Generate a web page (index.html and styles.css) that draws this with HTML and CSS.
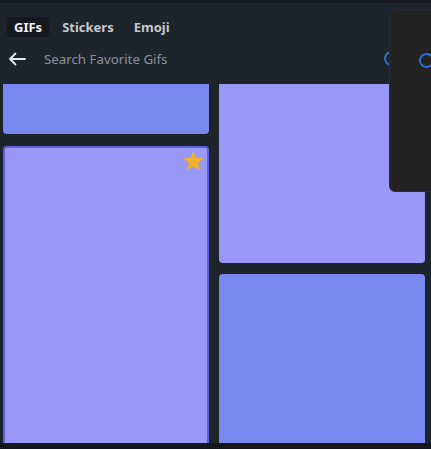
FILE: index.html
```html
<!DOCTYPE html>
<html>
<head>
<meta charset="utf-8">
<link rel="stylesheet" href="styles.css">
</head>
<body>
<div class="app">
  <div class="topline"></div>
  <div class="tabs">
    <span class="tab active">GIFs</span>
    <span class="tab">Stickers</span>
    <span class="tab">Emoji</span>
  </div>
  <div class="search">
    <svg class="back" width="18" height="14" viewBox="0 0 18 14"><path d="M17 7H2M7.5 1.5L2 7l5.5 5.5" fill="none" stroke="#e8e9ec" stroke-width="1.8" stroke-linecap="round" stroke-linejoin="round"/></svg>
    <span class="placeholder">Search Favorite Gifs</span>
    <span class="spinner"></span>
  </div>
  <div class="grid">
    <div class="col">
      <div class="tile blue t1"></div>
      <div class="tile lav t2 focused">
        <svg class="star" width="23" height="22" viewBox="0 0 24 23"><path d="M12 1l3.1 7 7.6.7-5.8 5 1.8 7.5L12 17.3 5.3 21.2l1.8-7.5-5.8-5 7.6-.7z" fill="#f0b132"/></svg>
      </div>
    </div>
    <div class="col">
      <div class="tile lav t3"></div>
      <div class="tile blue t4"></div>
    </div>
  </div>
  <div class="bottom"></div>
  <div class="popup"><span class="spinner inner"></span></div>
</div>
</body>
</html>
```
FILE: styles.css
```css
html, body {
  margin: 0;
  padding: 0;
  background: #1e242b;
}
.app {
  position: relative;
  width: 431px;
  height: 449px;
  overflow: hidden;
  background: #1e242b;
  font-family: "Noto Sans", "DejaVu Sans", sans-serif;
  display: flex;
  flex-direction: column;
}
.topline {
  height: 3px;
  background: #171b20;
}
.tabs {
  display: flex;
  align-items: center;
  gap: 6px;
  padding: 14px 0 0 7px;
  height: 20px;
}
.tab {
  font-size: 13px;
  font-weight: 700;
  color: #c5c8ce;
  padding: 0 7px;
  line-height: 20px;
  border-radius: 4px;
}
.tab.active {
  background: #15191e;
  color: #f2f3f5;
}
.search {
  display: flex;
  align-items: center;
  height: 30px;
  margin-top: 7px;
  padding-left: 8px;
}
.back {
  flex: none;
}
.placeholder {
  margin-left: 18px;
  font-size: 13.3px;
  color: #8b9098;
  flex: 1;
}
.spinner {
  width: 11px;
  height: 11px;
  border: 2px solid #2f6fd0;
  border-right-color: transparent;
  border-radius: 50%;
  margin-right: 32px;
}
.grid {
  display: flex;
  gap: 10px;
  padding: 0 6px 0 3px;
  margin-top: 10px;
  height: 362px;
  overflow: hidden;
}
.col {
  flex: 1;
  display: flex;
  flex-direction: column;
}
.tile {
  border-radius: 4px;
  flex: none;
  position: relative;
  box-sizing: border-box;
}
.blue { background: #7888ee; }
.lav { background: #9898f6; }
.t1 { height: 56px; margin-top: -6px; }
.t2 { height: 310px; margin-top: 12px; }
.t3 { height: 185px; margin-top: -6px; }
.t4 { height: 190px; margin-top: 11px; }
.focused {
  border: 2px solid #5d5fd6;
}
.star {
  position: absolute;
  top: 2px;
  right: 2px;
}
.bottom {
  height: 6px;
  background: #14181c;
}
.popup {
  position: absolute;
  left: 389px;
  top: 9px;
  width: 44px;
  height: 183px;
  background: #232323;
  border: 1px solid #2c2c2c;
  border-radius: 6px 0 0 6px;
  box-sizing: border-box;
}
.spinner.inner {
  position: absolute;
  left: 29px;
  top: 43px;
  margin: 0;
}
```
